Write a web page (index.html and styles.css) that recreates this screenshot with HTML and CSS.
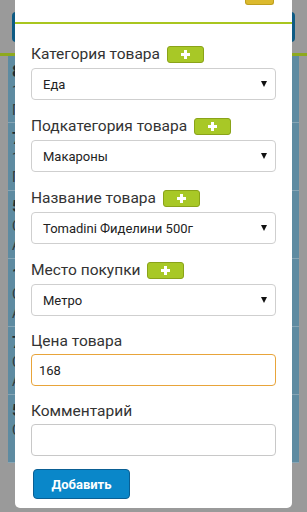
FILE: index.html
```html
<!DOCTYPE html>
<html lang="ru">
<head>
<meta charset="utf-8">
<link rel="stylesheet" href="styles.css">
</head>
<body>
<div class="page">
  <div class="topbar"><div class="top-btn"></div></div>
  <ul class="list">
    <li><b>8</b><span>1</span><span>Г</span></li>
    <li><b>7</b><span>1</span><span>Г</span></li>
    <li><b>5</b><span>С</span><span>А</span></li>
    <li><b>1</b><span>С</span><span>А</span></li>
    <li><b>7</b><span>С</span><span>А</span></li>
    <li><b>5</b><span>С</span></li>
  </ul>
</div>

<div class="modal">
  <div class="modal-head"><div class="close-btn"></div></div>
  <div class="modal-body">
    <div class="field">
      <div class="label-row"><span class="label">Категория товара</span><span class="badge"><svg width="9" height="9" viewBox="0 0 9 9"><rect x="3" y="0" width="3" height="9" fill="#fff"/><rect x="0" y="3" width="9" height="3" fill="#fff"/></svg></span></div>
      <div class="select"><span>Еда</span><i class="arrow"></i></div>
    </div>
    <div class="field">
      <div class="label-row"><span class="label">Подкатегория товара</span><span class="badge"><svg width="9" height="9" viewBox="0 0 9 9"><rect x="3" y="0" width="3" height="9" fill="#fff"/><rect x="0" y="3" width="9" height="3" fill="#fff"/></svg></span></div>
      <div class="select"><span>Макароны</span><i class="arrow"></i></div>
    </div>
    <div class="field">
      <div class="label-row"><span class="label">Название товара</span><span class="badge"><svg width="9" height="9" viewBox="0 0 9 9"><rect x="3" y="0" width="3" height="9" fill="#fff"/><rect x="0" y="3" width="9" height="3" fill="#fff"/></svg></span></div>
      <div class="select"><span>Tomadini Фиделини 500г</span><i class="arrow"></i></div>
    </div>
    <div class="field">
      <div class="label-row"><span class="label">Место покупки</span><span class="badge"><svg width="9" height="9" viewBox="0 0 9 9"><rect x="3" y="0" width="3" height="9" fill="#fff"/><rect x="0" y="3" width="9" height="3" fill="#fff"/></svg></span></div>
      <div class="select"><span>Метро</span><i class="arrow"></i></div>
    </div>
    <div class="field">
      <div class="label-row plain"><span class="label">Цена товара</span></div>
      <input class="input focused" type="text" value="168">
    </div>
    <div class="field">
      <div class="label-row plain"><span class="label">Комментарий</span></div>
      <input class="input" type="text" value="">
    </div>
    <button class="submit" type="button">Добавить</button>
  </div>
</div>
</body>
</html>
```

FILE: styles.css
```css
* { box-sizing: border-box; }
html, body { margin: 0; padding: 0; }
body {
  width: 307px;
  height: 512px;
  overflow: hidden;
  background: #9a9a9a;
  font-family: Roboto, "Noto Sans", sans-serif;
  position: relative;
}
.page { width: 307px; }
.topbar {
  padding: 12px 12px 11px;
  border-bottom: 3px solid #8ea91e;
}
.top-btn {
  height: 30px;
  background: #0e5b84;
  border-radius: 4px;
}
.list {
  list-style: none;
  margin: 0 8px;
  padding: 0;
  background: #5e8ba1;
}
.list li {
  height: 68px;
  border-bottom: 1px solid #86a5b5;
  padding: 4px 4px 0;
  display: flex;
  flex-direction: column;
  color: #2e3a40;
  font-size: 14px;
  line-height: 19px;
}
.list li:first-child { height: 67px; }
.list li b { font-size: 17px; line-height: 22px; color: #1e2a30; }

.modal {
  position: absolute;
  left: 15px;
  top: 0;
  width: 277px;
  height: 508px;
  background: #fff;
  border-radius: 0 0 5px 5px;
}
.modal-head {
  height: 24px;
  border-bottom: 2px solid #a9c61f;
  display: flex;
  justify-content: flex-end;
  align-items: flex-start;
  padding-right: 18px;
}
.close-btn {
  width: 29px;
  height: 5px;
  background: #dcba2e;
  border: 1px solid #bf9f1e;
  border-top: none;
  border-radius: 0 0 3px 3px;
}
.modal-body {
  padding: 19px 16px 9px;
}
.field { margin-bottom: 15px; }
.label-row {
  height: 22px;
  display: flex;
  align-items: center;
  margin-bottom: 3px;
}
.label-row.plain { height: 20px; }
.label {
  font-size: 15.5px;
  line-height: 20px;
  color: #333;
}
.badge {
  width: 37px;
  height: 17px;
  margin-left: 7px;
  background: #a8c826;
  border: 1px solid #8aa319;
  border-radius: 3px;
  display: flex;
  align-items: center;
  justify-content: center;
}
.badge svg { display: block; }
.select {
  height: 32px;
  border: 1px solid #cfcfcf;
  border-radius: 4px;
  display: flex;
  align-items: center;
  justify-content: space-between;
  padding: 0 8px 0 11px;
  font-size: 13px;
  color: #222;
}
.arrow {
  width: 0;
  height: 0;
  border-left: 3.5px solid transparent;
  border-right: 3.5px solid transparent;
  border-top: 6px solid #111;
}
.input {
  display: block;
  width: 100%;
  height: 32px;
  border: 1px solid #c8c8c8;
  border-radius: 4px;
  padding: 0 7px;
  font-family: Roboto, "Noto Sans", sans-serif;
  font-size: 13px;
  color: #222;
  background: #fff;
  outline: none;
  margin: 0;
}
.input.focused { border-color: #e8a43a; }
.submit {
  display: block;
  margin: -2px 0 0 2px;
  width: 97px;
  height: 30px;
  background: #0a87c9;
  border: 1px solid #0a5f94;
  border-radius: 4px;
  color: #fff;
  font-family: Roboto, "Noto Sans", sans-serif;
  font-weight: bold;
  font-size: 13px;
  padding: 0;
}
```
